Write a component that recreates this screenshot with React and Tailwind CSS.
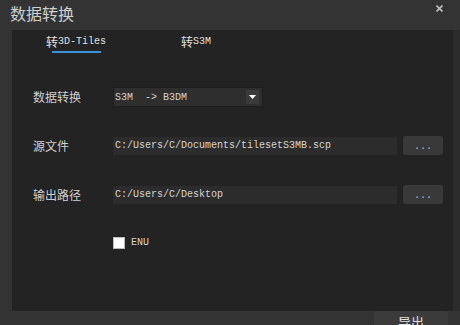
import { useState } from 'react'

const mono = { fontFamily: '"Liberation Mono", "DejaVu Sans Mono", "Noto Sans CJK SC", monospace' }
const cjk = { fontFamily: '"Noto Sans CJK SC", "Noto Sans", sans-serif' }

function PathRow({ label, value, top }) {
  return (
    <div className={`flex items-center ${top}`}>
      <div className="w-[101px] pl-[21px] text-[12px] text-[#cfcfcf]" style={cjk}>
        {label}
      </div>
      <div className="flex h-[18px] w-[284px] items-center bg-[#2c2c2c] pl-[2px] text-[10px] text-[#d4d4d4]" style={mono}>
        {value}
      </div>
      <button className="ml-[6px] flex h-[19px] w-[40px] items-end justify-center rounded-[3px] bg-[#393939] pb-[3px] text-[10px] leading-[10px] text-[#bdbdbd]" style={mono}>
        ...
      </button>
    </div>
  )
}

export default function App() {
  const [tab, setTab] = useState(0)
  const [enu, setEnu] = useState(false)

  return (
    <div className="flex h-[325px] w-[460px] flex-col overflow-hidden bg-[#333333]">
      <div className="relative flex h-[30px] items-start pl-[10px] pt-[2px]">
        <span className="text-[16px] leading-[22px] text-[#cfcfcf]" style={cjk}>数据转换</span>
        <svg className="absolute right-[17px] top-[5px]" width="7" height="7" viewBox="0 0 7 7">
          <path d="M0.5 0.5 L6.5 6.5 M6.5 0.5 L0.5 6.5" stroke="#bdbdbd" strokeWidth="1.6" />
        </svg>
      </div>

      <div className="flex flex-1">
        <div className="ml-[12px] flex h-[281px] w-[441px] flex-col bg-[#232323]">
          <div className="flex h-[24px] items-start pt-[5px]">
            <button
              onClick={() => setTab(0)}
              className="relative ml-[34px] flex items-center text-[#e0e0e0]"
            >
              <span className="text-[12px] leading-[14px]" style={cjk}>转</span>
              <span className="text-[10px] leading-[14px]" style={mono}>3D-Tiles</span>
              {tab === 0 && <span className="absolute left-[6px] top-[16px] h-[2px] w-[49px] bg-[#3b8fdb]" />}
            </button>
            <button
              onClick={() => setTab(1)}
              className="relative ml-[75px] flex items-center text-[#e0e0e0]"
            >
              <span className="text-[12px] leading-[14px]" style={cjk}>转</span>
              <span className="text-[10px] leading-[14px]" style={mono}>S3M</span>
              {tab === 1 && <span className="absolute left-0 top-[16px] h-[2px] w-[30px] bg-[#3b8fdb]" />}
            </button>
          </div>

          <div className="mt-[33px] flex items-center">
            <div className="w-[101px] pl-[21px] text-[12px] text-[#cfcfcf]" style={cjk}>数据转换</div>
            <div className="flex h-[20px] w-[150px] items-center justify-between border border-[#1e1e1e] bg-[#2e2e2e] pl-[1px] pr-[3px]">
              <span className="text-[10px] text-[#d4d4d4] whitespace-pre" style={mono}>S3M  -&gt; B3DM</span>
              <span className="flex h-[14px] w-[13px] items-center justify-center bg-[#3a3a3a]">
                <svg width="7" height="4" viewBox="0 0 7 4">
                  <path d="M0 0 H7 L3.5 4 Z" fill="#ffffff" />
                </svg>
              </span>
            </div>
          </div>

          <PathRow label="源文件" value="C:/Users/C/Documents/tilesetS3MB.scp" top="mt-[29px]" />
          <PathRow label="输出路径" value="C:/Users/C/Desktop" top="mt-[30px]" />

          <label className="ml-[101px] mt-[31px] flex items-center gap-[6px]">
            <span
              onClick={() => setEnu(!enu)}
              className="flex h-[12px] w-[12px] items-center justify-center border border-[#bbbbbb] bg-white text-[9px] text-black"
            >
              {enu ? '✓' : ''}
            </span>
            <span className="text-[10px] text-[#d4d4d4]" style={mono}>ENU</span>
          </label>
        </div>
        <div className="w-[7px] bg-[#2c2c2c]" />
      </div>

      <div className="flex h-[14px] justify-end pr-[12px]">
        <button className="h-[20px] w-[74px] rounded-t-[3px] bg-[#3b3b3b] pt-[2px] text-[13px] leading-[14px] text-[#e0e0e0]" style={cjk}>
          导出
        </button>
      </div>
    </div>
  )
}
